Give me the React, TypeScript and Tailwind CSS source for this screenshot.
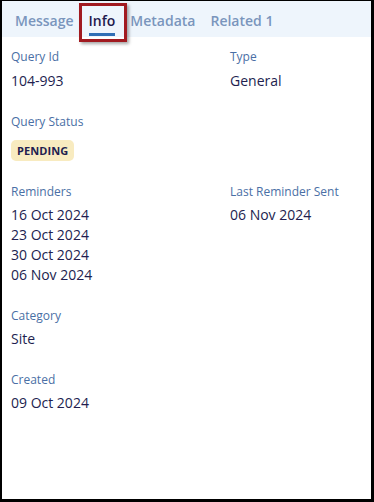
import React from "react";

const font = { fontFamily: '"Open Sans", "Noto Sans", sans-serif' };

function Field({ label, children, gap = "mt-[5px]" }: { label: string; children: React.ReactNode; gap?: string }) {
  return (
    <div className="flex flex-col">
      <div className="text-[12px] leading-[16px] text-[#4a6fa5]">{label}</div>
      <div className={`${gap} text-[14px] leading-[20px] text-[#221e4f]`}>{children}</div>
    </div>
  );
}

export default function App() {
  return (
    <div
      className="w-[374px] h-[502px] bg-white border-l-2 border-t border-r-[3px] border-b-[3px] border-black flex flex-col overflow-hidden"
      style={font}
    >
      <div className="h-[36px] bg-[#eef5fc] flex items-start pl-[13px] gap-[15px] shrink-0">
        <div className="text-[14px] font-semibold text-[#7a95bd] leading-[20px] pt-[10px]">Message</div>
        <div className="relative">
          <div className="text-[14px] font-semibold text-[#1f1a4d] leading-[20px] pt-[10px]">Info</div>
          <div className="h-[3px] bg-[#2f6eb5] mt-[2px]" />
          <div className="absolute left-[-10px] right-[-12px] top-[2px] h-[39px] border-[3px] border-[#a11a20] shadow-[2px_2px_3px_rgba(0,0,0,0.35)]" />
        </div>
        <div className="text-[14px] font-semibold text-[#7a95bd] leading-[20px] pt-[10px]">Metadata</div>
        <div className="text-[14px] font-semibold text-[#7a95bd] leading-[20px] pt-[10px]">Related 1</div>
      </div>
      <div className="pl-[9px] pt-[12px] flex flex-col gap-[23px]">
        <div className="grid grid-cols-[219px_1fr]">
          <Field label="Query Id" gap="mt-[6px]">104-993</Field>
          <Field label="Type" gap="mt-[6px]">General</Field>
        </div>
        <div className="flex flex-col">
          <div className="text-[12px] leading-[16px] text-[#4a6fa5]">Query Status</div>
          <div className="mt-[10px] flex">
            <div className="bg-[#f8ebc0] rounded-[5px] px-[6px] h-[21px] leading-[21px] text-[11px] font-bold text-[#221e4f] tracking-[0.1px]">
              PENDING
            </div>
          </div>
        </div>
        <div className="grid grid-cols-[219px_1fr]">
          <Field label="Reminders">
            <div>16 Oct 2024</div>
            <div>23 Oct 2024</div>
            <div>30 Oct 2024</div>
            <div>06 Nov 2024</div>
          </Field>
          <Field label="Last Reminder Sent">06 Nov 2024</Field>
        </div>
        <Field label="Category">Site</Field>
        <Field label="Created">09 Oct 2024</Field>
      </div>
    </div>
  );
}
